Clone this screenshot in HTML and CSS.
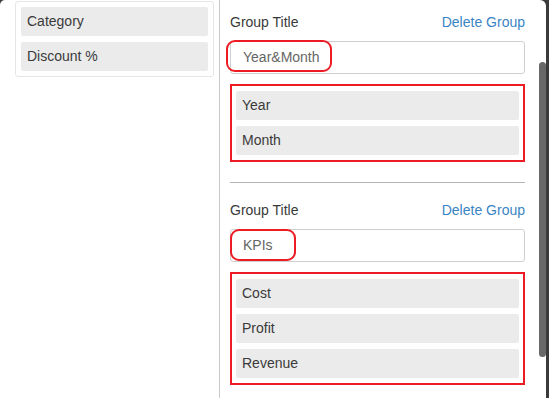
FILE: index.html
```html
<!DOCTYPE html>
<html>
<head>
<meta charset="utf-8">
<link rel="stylesheet" href="styles.css">
</head>
<body>
<div class="dialog">
  <div class="left-col">
    <div class="field-panel">
      <div class="item">Category</div>
      <div class="item">Discount %</div>
    </div>
  </div>
  <div class="right-col">
    <div class="group">
      <div class="group-head">
        <span class="group-label">Group Title</span>
        <a class="delete-link">Delete Group</a>
      </div>
      <div class="input-wrap">
        <div class="title-input">Year&amp;Month</div>
        <div class="mark mark-1"></div>
      </div>
      <div class="group-list">
        <div class="item">Year</div>
        <div class="item">Month</div>
      </div>
    </div>
    <div class="separator"></div>
    <div class="group">
      <div class="group-head">
        <span class="group-label">Group Title</span>
        <a class="delete-link">Delete Group</a>
      </div>
      <div class="input-wrap">
        <div class="title-input">KPIs</div>
        <div class="mark mark-2"></div>
      </div>
      <div class="group-list">
        <div class="item">Cost</div>
        <div class="item">Profit</div>
        <div class="item">Revenue</div>
      </div>
    </div>
  </div>
  <div class="scroll-thumb"></div>
</div>
</body>
</html>
```
FILE: styles.css
```css
* { box-sizing: border-box; }
html, body { margin: 0; padding: 0; }
body {
  background: #3a3a3a;
  font-family: "Liberation Sans", Arial, sans-serif;
  font-size: 14px;
  color: #3a3a3a;
  width: 549px;
  height: 398px;
  overflow: hidden;
}
.dialog {
  position: relative;
  width: 546px;
  height: 398px;
  background: #fff;
  border-radius: 5px 6px 0 0;
  display: flex;
  overflow: hidden;
}
.left-col {
  width: 220px;
  flex: none;
  border-right: 1px solid #c8c8c8;
  padding: 1px 5px 0 15px;
}
.field-panel {
  border: 1px solid #e6e6e6;
  border-radius: 3px;
  padding: 5px;
  display: flex;
  flex-direction: column;
  gap: 6px;
}
.item {
  background: #ebebeb;
  border-radius: 2px;
  height: 29px;
  line-height: 29px;
  padding-left: 6px;
  color: #3a3a3a;
}
.right-col {
  flex: 1;
  padding: 12px 21px 0 10px;
}
.group-head {
  display: flex;
  justify-content: space-between;
  line-height: 20px;
  height: 20px;
  margin-bottom: 9px;
}
.delete-link {
  color: #3a84c4;
  cursor: pointer;
}
.input-wrap {
  position: relative;
  margin-bottom: 10px;
}
.title-input {
  height: 33px;
  line-height: 31px;
  border: 1px solid #cfcfcf;
  border-radius: 3px;
  padding-left: 12px;
  color: #666;
}
.mark {
  position: absolute;
  border: 2px solid #ed1c24;
  border-radius: 9px;
  height: 32px;
}
.mark-1 { left: -4px; top: -1px; width: 106px; }
.mark-2 { left: 0; top: 0; width: 66px; }
.group-list {
  border: 2px solid #ed1c24;
  padding: 5px 4px;
  display: flex;
  flex-direction: column;
  gap: 6px;
}
.separator {
  height: 1px;
  background: #b4b4b4;
  margin: 20px 0 17px;
}
.scroll-thumb {
  position: absolute;
  right: 0;
  top: 62px;
  width: 7px;
  height: 295px;
  background: #686868;
  border-radius: 4px;
}
```
